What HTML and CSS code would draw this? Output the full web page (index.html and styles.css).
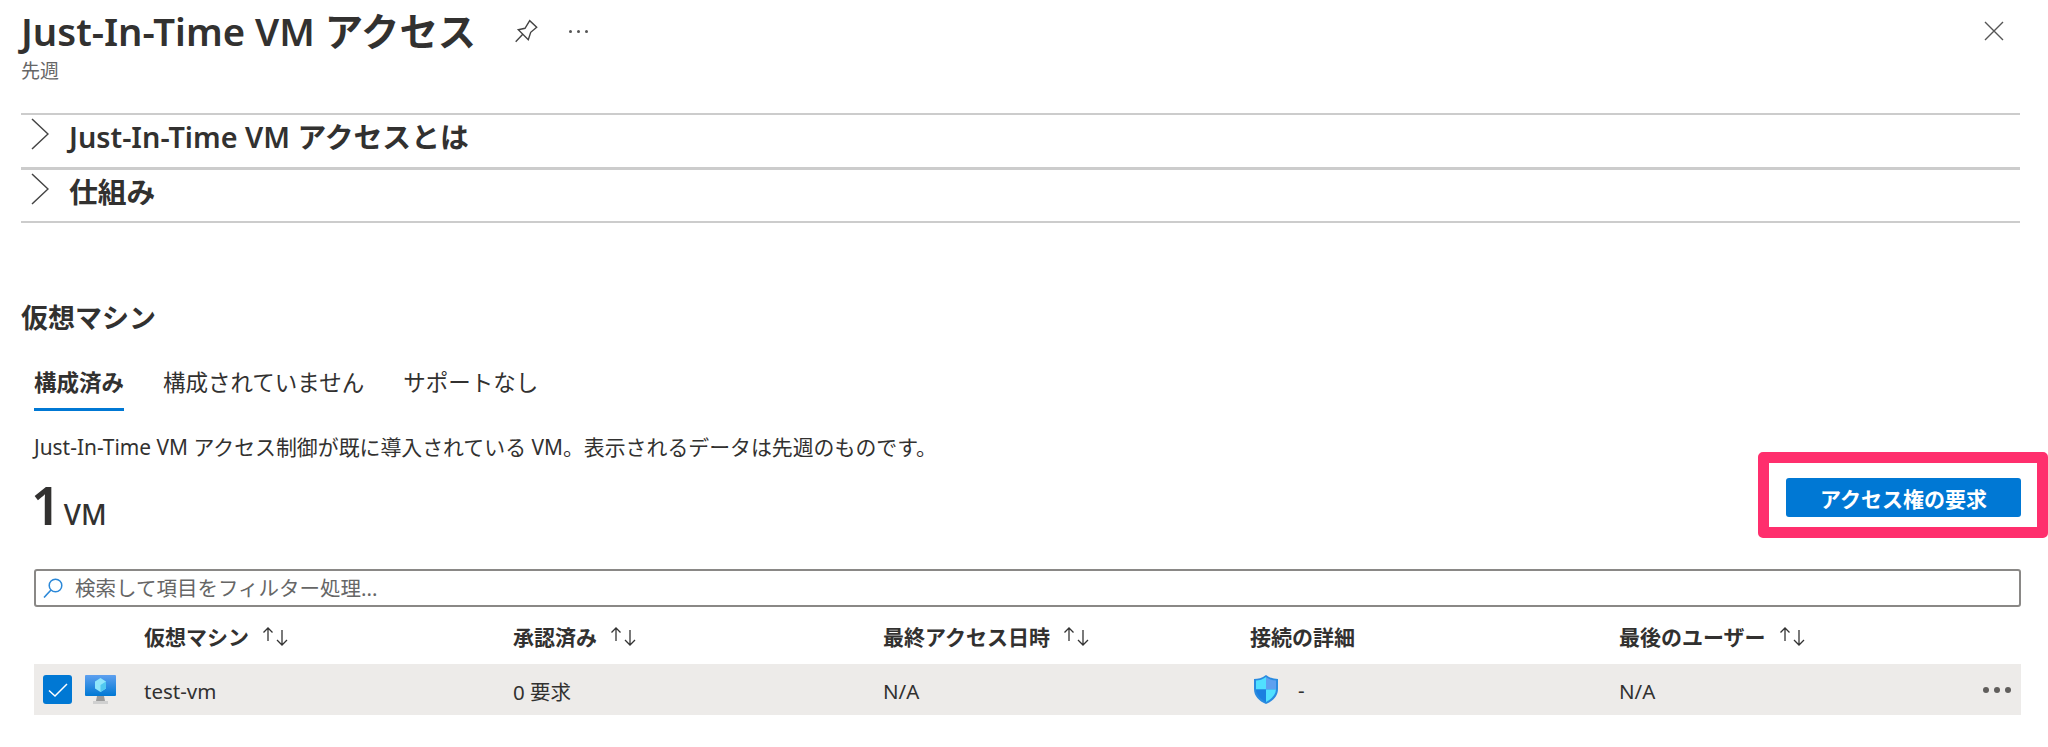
FILE: index.html
```html
<!DOCTYPE html>
<html lang="ja">
<head>
    <meta charset="UTF-8">
    <title>Just-In-Time VM アクセス</title>
    <link rel="stylesheet" href="styles.css">
</head>
<body>
    <div class="header">
        <h1 class="title">Just-In-Time VM アクセス</h1>
        <svg class="pin" width="24" height="24" viewBox="0 0 24 24"><path d="M1.7 22.7L9 15M4.3 10.7L11 9.3L15.7 1.7L22.7 8.3L16.7 13.3L14.3 20.7Z" fill="none" stroke="#444" stroke-width="1.4"/></svg>
        <div class="header-dots"><span></span><span></span><span></span></div>
        <svg class="close" width="20" height="20" viewBox="0 0 20 20"><path d="M1 1L19 19M19 1L1 19" stroke="#555" stroke-width="1.4"/></svg>
    </div>
    <p class="subtitle">先週</p>

    <div class="accordion">
        <div class="acc-item">
            <svg class="chevron" width="18" height="32" viewBox="0 0 18 32"><path d="M1 1L17 16L1 31" fill="none" stroke="#444" stroke-width="1.5"/></svg>
            <h2>Just-In-Time VM アクセスとは</h2>
        </div>
        <div class="acc-item thick">
            <svg class="chevron" width="18" height="32" viewBox="0 0 18 32"><path d="M1 1L17 16L1 31" fill="none" stroke="#444" stroke-width="1.5"/></svg>
            <h2>仕組み</h2>
        </div>
    </div>

    <h3 class="section-title">仮想マシン</h3>

    <div class="content">
        <div class="tabs">
            <div class="tab active">構成済み</div>
            <div class="tab">構成されていません</div>
            <div class="tab">サポートなし</div>
        </div>
        <p class="desc">Just-In-Time VM アクセス制御が既に導入されている VM。表示されるデータは先週のものです。</p>

        <div class="summary">
            <div class="count"><span class="num">1</span><span class="unit">VM</span></div>
            <button class="request">アクセス権の要求</button>
            <div class="highlight"></div>
        </div>

        <div class="search">
            <svg width="20" height="20" viewBox="0 0 20 20"><circle cx="12.5" cy="7.5" r="6.3" fill="none" stroke="#2b88d8" stroke-width="1.5"/><path d="M8 12L1 19.5" stroke="#2b88d8" stroke-width="1.6"/></svg>
            <span>検索して項目をフィルター処理...</span>
        </div>

        <div class="grid head">
            <div></div>
            <div class="th">仮想マシン<svg class="sort" width="28" height="20" viewBox="0 0 28 20"><path d="M6 15V2M1.5 6.5L6 2L10.5 6.5M20 4V19M15 14L20 19L25 14" fill="none" stroke="#333" stroke-width="1.3"/></svg></div>
            <div class="th">承認済み<svg class="sort" width="28" height="20" viewBox="0 0 28 20"><path d="M6 15V2M1.5 6.5L6 2L10.5 6.5M20 4V19M15 14L20 19L25 14" fill="none" stroke="#333" stroke-width="1.3"/></svg></div>
            <div class="th">最終アクセス日時<svg class="sort" width="28" height="20" viewBox="0 0 28 20"><path d="M6 15V2M1.5 6.5L6 2L10.5 6.5M20 4V19M15 14L20 19L25 14" fill="none" stroke="#333" stroke-width="1.3"/></svg></div>
            <div class="th">接続の詳細</div>
            <div class="th">最後のユーザー<svg class="sort" width="28" height="20" viewBox="0 0 28 20"><path d="M6 15V2M1.5 6.5L6 2L10.5 6.5M20 4V19M15 14L20 19L25 14" fill="none" stroke="#333" stroke-width="1.3"/></svg></div>
        </div>

        <div class="grid row">
            <div class="row-icons">
                <div class="check"><svg width="20" height="16" viewBox="0 0 20 16"><path d="M1 8.5L7 14L19 2" fill="none" stroke="#fff" stroke-width="1.5"/></svg></div>
                <svg width="31" height="29" viewBox="0 0 31 29">
                    <defs><linearGradient id="screen" x1="0" y1="0" x2="0" y2="1"><stop offset="0" stop-color="#5ea0ef"/><stop offset="1" stop-color="#0078d4"/></linearGradient></defs>
                    <path d="M12 21H19L20 26H11Z" fill="#9a9a9a"/>
                    <rect x="8" y="26" width="15" height="3" fill="#d0d0d0"/>
                    <rect x="0" y="0" width="31" height="21" rx="1" fill="url(#screen)"/>
                    <path d="M15.5 3L21 6.5V13.5L15.5 17L10 13.5V6.5Z" fill="#8fe6fb"/>
                    <path d="M15.5 10L21 6.5V13.5L15.5 17Z" fill="#50c8f0"/>
                </svg>
            </div>
            <div class="cell">test-vm</div>
            <div class="cell">0 要求</div>
            <div class="cell">N/A</div>
            <div class="conn">
                <svg width="26" height="31" viewBox="0 0 26 31">
                    <path d="M13 1C9 4 5 5 1 5V15C1 22 6 27 13 30C20 27 25 22 25 15V5C21 5 17 4 13 1Z" fill="#2a8be0"/>
                    <path d="M13 3C10 5.5 6 6.5 3 6.5V15.5H13Z" fill="#50e0ff"/>
                    <path d="M13 3C16 5.5 20 6.5 23 6.5V15.5H13Z" fill="#5ea0ef"/>
                    <path d="M3 15.5C3.5 21 7.5 25 13 28V15.5Z" fill="#1b7fe0"/>
                    <path d="M23 15.5C22.5 21 18.5 25 13 28V15.5Z" fill="#50e0ff"/>
                </svg>
                <span>-</span>
            </div>
            <div class="last-cell"><span class="cell">N/A</span><div class="row-dots"><span></span><span></span><span></span></div></div>
        </div>
    </div>
</body>
</html>
```

FILE: styles.css
```css
*{
    margin: 0;
    padding: 0;
    box-sizing: border-box;
}
body{
    background: white;
    color: #323130;
    font-family: "Noto Sans", "Noto Sans CJK JP", sans-serif;
}

.header{
    display: flex;
    align-items: center;
    height: 62px;
    padding-left: 21px;
    padding-right: 44px;
}
.title{
    font-size: 38.3px;
    font-weight: 600;
    line-height: 62px;
    white-space: nowrap;
}
.pin{
    margin-left: 38px;
}
.header-dots{
    display: flex;
    gap: 5px;
    margin-left: 31px;
}
.header-dots span{
    width: 3px;
    height: 3px;
    border-radius: 50%;
    background: #555;
}
.close{
    margin-left: auto;
}
.subtitle{
    font-size: 19px;
    line-height: 18px;
    color: #666;
    padding-left: 21px;
}

.accordion{
    margin: 33px 28px 0 21px;
    border-bottom: 2px solid #ccc;
}
.acc-item{
    display: flex;
    align-items: flex-start;
    height: 54px;
    border-top: 2px solid #ccc;
}
.acc-item.thick{
    border-top-width: 3px;
}
.chevron{
    margin: 3px 0 0 10px;
}
.acc-item h2{
    font-size: 28.8px;
    font-weight: 600;
    line-height: 44px;
    margin-left: 20px;
}

.section-title{
    font-size: 27px;
    font-weight: 600;
    line-height: 30px;
    margin: 80px 0 0 21px;
}

.content{
    padding: 0 27px 0 34px;
}
.tabs{
    display: flex;
    gap: 39px;
    margin-top: 33px;
}
.tab{
    font-size: 22.5px;
    line-height: 34px;
    padding-bottom: 8px;
    border-bottom: 3px solid transparent;
}
.tab.active{
    font-weight: 700;
    border-bottom-color: #0078d4;
}
.desc{
    font-size: 20.9px;
    line-height: 24px;
    margin-top: 24px;
}

.summary{
    position: relative;
    display: flex;
    justify-content: space-between;
    padding-top: 19px;
    margin-bottom: 52px;
}
.count{
    display: flex;
    align-items: baseline;
    height: 39px;
    line-height: 54px;
    margin-left: -3px;
}
.num{
    font-size: 52px;
    font-weight: 600;
}
.unit{
    font-size: 28px;
    font-weight: 500;
    margin-left: 3px;
}
.request{
    width: 235px;
    height: 39px;
    border: none;
    border-radius: 3px;
    background: #0078d4;
    color: white;
    font-family: inherit;
    font-size: 21px;
    font-weight: 700;
}
.highlight{
    position: absolute;
    top: -7px;
    right: -27px;
    width: 290px;
    height: 86px;
    border: 11px solid #ff2f6d;
    border-radius: 5px;
}

.search{
    display: flex;
    align-items: center;
    height: 38px;
    border: 2px solid #8a8886;
    border-radius: 3px;
    padding-left: 7px;
    font-size: 20.5px;
    color: #666;
}
.search span{
    margin-left: 12px;
    margin-top: -2px;
}

.grid{
    display: grid;
    grid-template-columns: 110px 369px 370px 367px 369px 1fr;
    font-size: 20.5px;
}
.head{
    height: 57px;
}
.th{
    display: flex;
    align-items: center;
    height: 58px;
    font-size: 21px;
    font-weight: 700;
}
.sort{
    margin-left: 13px;
}
.row{
    height: 51px;
    background: #edebe9;
    align-items: center;
}
.cell{
    padding-top: 3px;
}
.row-icons{
    display: flex;
    align-items: center;
    padding-left: 9px;
    gap: 13px;
}
.check{
    display: flex;
    align-items: center;
    justify-content: center;
    width: 29px;
    height: 29px;
    border-radius: 3px;
    background: #0078d4;
}
.conn{
    display: flex;
    align-items: center;
    padding-left: 3px;
}
.conn span{
    margin-left: 19px;
}
.last-cell{
    display: flex;
    align-items: center;
    justify-content: space-between;
    padding-right: 10px;
}
.row-dots{
    display: flex;
    gap: 5px;
}
.row-dots span{
    width: 6px;
    height: 6px;
    border-radius: 50%;
    background: #605e5c;
}
```
